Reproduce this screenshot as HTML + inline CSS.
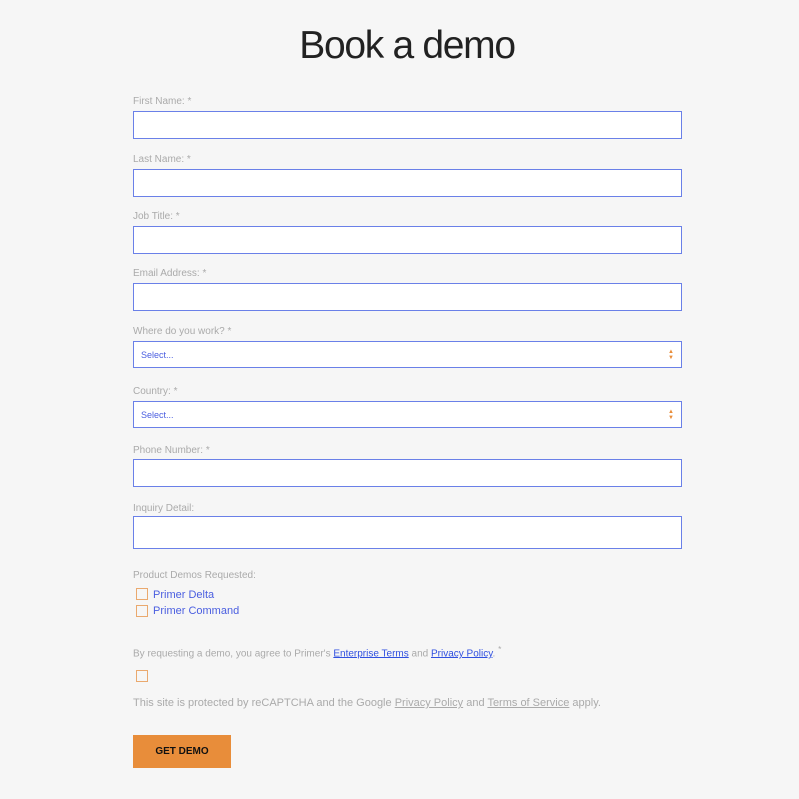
<!DOCTYPE html>
<html><head><style>
body{margin:0;width:799px;height:799px;background:#f6f6f6;font-family:"Liberation Sans",sans-serif;position:relative;overflow:hidden}
.a{position:absolute}
h1{position:absolute;top:21px;left:0;width:814px;text-align:center;margin:0;font-weight:normal;font-size:39px;letter-spacing:-1.3px;color:#222;line-height:50px}
.l{position:absolute;left:133px;font-size:10px;color:#aaa;line-height:12px}
.i{position:absolute;left:133px;width:547px;background:#fff;border:1px solid #6a80e8}
.s{font-size:9px;color:#4a5ee0;line-height:26px;padding-left:7px;box-sizing:border-box;width:549px}
.ar{position:absolute;right:7px;top:7px;color:#e88d3a;font-size:6px;line-height:6px}
.cb{position:absolute;left:136px;width:10px;height:10px;border:1px solid #eaa96e;background:#f6f6f6}
.ct{position:absolute;left:153px;font-size:11px;color:#4a5ee0;line-height:13px}
a{color:#3050e0}
</style></head><body>
<h1>Book a demo</h1>
<div class="l" style="top:96px">First Name: *</div><div class="i" style="top:111px;height:26px"></div>
<div class="l" style="top:154px">Last Name: *</div><div class="i" style="top:169px;height:26px"></div>
<div class="l" style="top:211px">Job Title: *</div><div class="i" style="top:226px;height:26px"></div>
<div class="l" style="top:268px">Email Address: *</div><div class="i" style="top:283px;height:26px"></div>
<div class="l" style="top:326px">Where do you work? *</div><div class="i s" style="top:341px;height:27px">Select...<div class="ar">▲<br>▼</div></div>
<div class="l" style="top:386px">Country: *</div><div class="i s" style="top:401px;height:27px">Select...<div class="ar">▲<br>▼</div></div>
<div class="l" style="top:445px">Phone Number: *</div><div class="i" style="top:459px;height:26px"></div>
<div class="l" style="top:503px">Inquiry Detail:</div><div class="i" style="top:516px;height:31px"></div>
<div class="l" style="top:570px">Product Demos Requested:</div>
<div class="cb" style="top:588px"></div><div class="ct" style="top:589px">Primer Delta</div>
<div class="cb" style="top:605px"></div><div class="ct" style="top:605px">Primer Command</div>
<div class="l" style="top:643px">By requesting a demo, you agree to Primer's <a href="#">Enterprise Terms</a> and <a href="#">Privacy Policy</a>. <sup>*</sup></div>
<div class="cb" style="top:670px"></div>
<div class="l" style="top:697px;font-size:11px;color:#aaa">This site is protected by reCAPTCHA and the Google <u>Privacy Policy</u> and <u>Terms of Service</u> apply.</div>
<div class="a" style="left:133px;top:735px;width:98px;height:33px;background:#e88d3a;color:#111;font-weight:bold;font-size:10px;line-height:34px;text-align:center">GET DEMO</div>
</body></html>
